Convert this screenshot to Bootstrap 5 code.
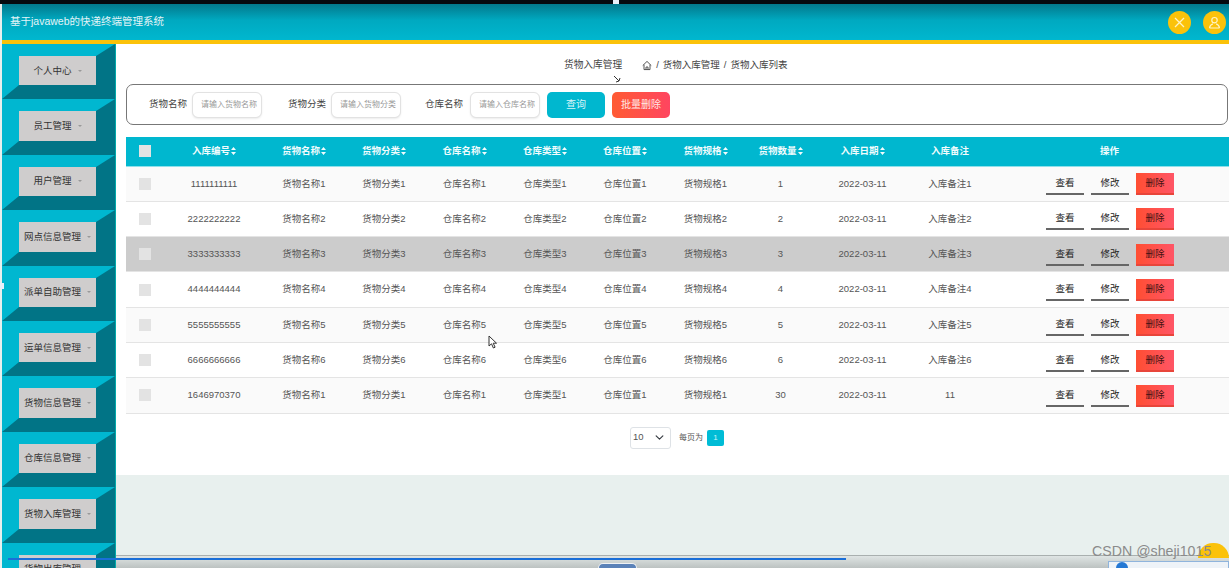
<!DOCTYPE html>
<html lang="zh">
<head>
    <meta charset="UTF-8">
    <meta name="viewport" content="width=device-width, initial-scale=1.0">
    <title>货物入库列表</title>
    <link href="https://cdn.jsdelivr.net/npm/bootstrap@5.3.0/dist/css/bootstrap.min.css" rel="stylesheet">
    <style>
        body {
            height: 568px;
            overflow: hidden;
            position: relative;
            background: #e8f0ee;
            font-family: "Liberation Sans", "Noto Sans CJK SC", sans-serif;
            font-size: 9.5px;
            color: #555;
        }
        .video-top { height: 4px; background: #06090f; flex: none; }
        .app-head {
            height: 36px;
            flex: none;
            margin-left: 2px;
            padding: 0 3px 0 8px;
            color: #e4f4f7;
            font-size: 10.5px;
            background: linear-gradient(180deg, #03788c 0, #00a9c0 45%, #00b7cf 100%);
        }
        .head-icons { column-gap: 12px; }
        .yellow-line { height: 4px; flex: none; margin-left: 2px; background: #fbc20a; }
        .round-icon {
            width: 23px;
            height: 23px;
            border-radius: 50%;
            background: #fbc20a;
        }
        .side-menu {
            width: 114px;
            flex: none;
            margin-left: 2px;
            overflow: hidden;
            border-right: 1px solid #0aa;
        }
        .side-btn {
            display: flex;
            align-items: center;
            justify-content: center;
            width: 113px;
            height: 55.4px;
            padding: 0;
            font-size: 9.5px;
            color: #333;
            border-radius: 0;
            background: #cfcdcd;
            border-style: solid;
            border-width: 12px 19px 14.4px 17px;
            border-color: #00b7d0 #017486 #017486 #00b7d0;
        }
        .side-btn:hover { color: #333; background: #cfcdcd; border-color: #00b7d0 #017486 #017486 #00b7d0; }
        .side-btn.dropdown-toggle::after { margin-left: 6px; border-top-color: #999; border-width: 2px 2px 0; }
        .main-pane { height: 431px; flex: none; background: #fff; padding: 0 0 0 10px; }
        .crumb-row { height: 40px; padding: 2px 0 0 438px; color: #444; font-size: 9.7px; }
        .crumb-row .breadcrumb { margin: 0 0 0 20px; font-size: 9.5px; }
        .crumb-row .breadcrumb-item + .breadcrumb-item { padding-left: 4px; }
        .crumb-row .breadcrumb-item + .breadcrumb-item::before { padding-right: 4px; color: #444; }
        .crumb-row .breadcrumb-item.active { color: #444; }
        .search-bar {
            height: 41px;
            margin-right: 1px;
            padding-left: 22px;
            border: 1.5px solid #777;
            border-radius: 7px;
            color: #444;
        }
        .search-bar label { margin-right: 5px; }
        .search-input {
            width: 70px;
            height: 26px;
            margin-right: 26px;
            padding: 0 0 0 8px;
            font-size: 8px;
            border: 1px solid #e2e2e2;
            border-radius: 6px;
            box-shadow: 0 1px 2px rgba(0, 0, 0, .08);
        }
        .search-bar .input-mid { margin-right: 24px; }
        .search-input::placeholder { color: #999; }
        .search-btn {
            width: 58px;
            height: 26px;
            padding: 0;
            font-size: 10px;
            color: #e8fbff;
            border: 0;
            border-radius: 5px;
        }
        .btn-cyan, .btn-cyan:hover { background: #00b7cf; color: #d8f5f9; }
        .btn-coral, .btn-coral:hover { background: linear-gradient(90deg, #ff5b33, #ff4560); color: #ffe9e4; }
        .search-bar .gap-seven { margin-right: 7px; }
        .data-table {
            table-layout: fixed;
            width: 1103px;
            margin: 12px 0 0;
            font-size: 9.5px;
        }
        .data-table th {
            height: 29px;
            padding: 0;
            text-align: center;
            vertical-align: middle;
            color: #f2fcfd;
            font-size: 9.5px;
            background: #00b7cf;
            border-bottom: 1px solid #8ee0ea;
        }
        .data-table td {
            height: 35.3px;
            padding: 0;
            text-align: center;
            vertical-align: middle;
            color: #555;
            background: var(--row-bg, #fff);
            border-bottom: 1px solid #e4e4e4;
        }
        .data-table tr.tone-soft { --row-bg: #fafafa; }
        .data-table tr.tone-grey { --row-bg: #cccccc; }
        .data-table th:first-child, .data-table td:first-child { text-align: left; padding-left: 13px; }
        .col-w38 { width: 38px; }
        .col-w69 { width: 69px; }
        .col-w80 { width: 80px; }
        .col-w81 { width: 81px; }
        .col-w95 { width: 95px; }
        .col-w100 { width: 100px; }
        .col-w239 { width: 239px; }
        .tick {
            display: block;
            width: 12px;
            height: 12px;
            appearance: none;
            background: #e3e3e3;
            border: 0;
            margin: 0;
        }
        .sort-mark { margin-left: 1px; vertical-align: -1px; }
        .row-ops { gap: 6.5px; padding: 1px 0 0 1px; }
        .op-btn {
            width: 38.5px;
            height: 22px;
            padding: 0;
            font-size: 9.5px;
            color: #222;
            background: transparent;
            border: 0;
            border-bottom: 2px solid #666;
            border-radius: 0;
        }
        .op-del, .op-del:hover {
            color: #411;
            background: linear-gradient(90deg, #ff4e32, #ff5566);
            border-bottom-color: #e8453a;
        }
        .pager { margin-top: 13px; padding-left: 504px; font-size: 8px; color: #555; }
        .page-size {
            width: 41px;
            height: 22px;
            padding: 0 0 0 2px;
            font-size: 9.5px;
            color: #555;
            background-size: 9px 9px;
            background-position: right 6px center;
            border-radius: 3px;
        }
        .page-now {
            width: 17px;
            height: 16px;
            border-radius: 2px;
            background: #00bcd6;
            color: #cdf3f8;
            text-align: center;
            line-height: 16px;
        }
        .play-bar {
            position: absolute;
            left: 116px;
            right: 0;
            bottom: 0;
            height: 13px;
            background: linear-gradient(180deg, #dfe5e4, #bcc2c1);
            border-top: 1px solid #a9b0af;
        }
        .play-progress {
            position: absolute;
            left: 8px;
            top: 558px;
            height: 2px;
            width: 838px;
            background: #1a6fd8;
        }
        .task-chip {
            position: absolute;
            left: 992px;
            bottom: 0;
            right: 0;
            height: 7px;
            padding-left: 7px;
            background: #eef3f8;
            border: 1px solid #8fb4dc;
            border-bottom: 0;
        }
        .task-chip span {
            display: block;
            width: 12px;
            height: 12px;
            border-radius: 50%;
            background: #2478d4;
        }
        .task-logo {
            position: absolute;
            left: 482px;
            bottom: 0;
            width: 39px;
            height: 5px;
            border-radius: 20px 20px 0 0;
            background: #5b82b8;
            border: 1px solid #eef1f4;
            border-bottom: 0;
        }
        .corner-dot {
            position: absolute;
            left: 1198px;
            top: 543px;
            width: 31px;
            height: 15px;
            border-radius: 16px 16px 0 0;
            background: #fbc20a;
        }
        .watermark {
            position: absolute;
            left: 1092px;
            top: 543px;
            color: #8b8b8b;
            font-size: 14.2px;
            line-height: 16px;
        }
        .video-handle { position: absolute; background: #e8f0fa; }
        .handle-top { left: 613px; top: 0; width: 6px; height: 4px; }
        .handle-left { left: 0; top: 283px; width: 4px; height: 6px; }
        .mouse-mark { position: absolute; }
        .mark-a { left: 488px; top: 335px; }
        .mark-b { left: 613px; top: 75px; }
    </style>
</head>
<body class="d-flex flex-column">
    <div class="video-top"></div>
    <header class="app-head d-flex align-items-center justify-content-between">
        <span>基于javaweb的快递终端管理系统</span>
        <div class="head-icons d-flex">
            <span class="round-icon d-flex align-items-center justify-content-center">
                <svg width="13" height="13" viewBox="0 0 13 13" fill="none" stroke="#fff3c4" stroke-width="1.3"><path d="M2 2l9 9M11 2l-9 9"/></svg>
            </span>
            <span class="round-icon d-flex align-items-center justify-content-center">
                <svg width="13" height="13" viewBox="0 0 13 13" fill="none" stroke="#fff3c4" stroke-width="1.2"><circle cx="6.5" cy="4.2" r="2.7"/><path d="M1.5 12c.3-2.6 2-3.8 3.4-4.2M11.5 12c-.3-2.6-2-3.8-3.4-4.2M1.5 12h10"/></svg>
            </span>
        </div>
    </header>
    <div class="yellow-line"></div>

    <div class="d-flex flex-grow-1 overflow-hidden">
        <nav class="side-menu" id="sideMenu"></nav>
        <div class="flex-grow-1">
            <main class="main-pane">
                <div class="crumb-row d-flex align-items-center">
                    <span>货物入库管理</span>
                    <ol class="breadcrumb align-items-center">
                        <li class="breadcrumb-item d-flex align-items-center">
                            <svg width="10" height="11" viewBox="0 0 11 11" fill="none" stroke="#444" stroke-width="1"><path d="M.8 5.6L5.5 1l4.7 4.6M2.2 4.6V10h6.6V4.6M4.4 10V7.2h2.2V10"/></svg>
                        </li>
                        <li class="breadcrumb-item">货物入库管理</li>
                        <li class="breadcrumb-item active">货物入库列表</li>
                    </ol>
                </div>
                <form class="search-bar d-flex align-items-center">
                    <label>货物名称</label><input class="form-control search-input" placeholder="请输入货物名称">
                    <label>货物分类</label><input class="form-control search-input input-mid" placeholder="请输入货物分类">
                    <label class="gap-seven">仓库名称</label><input class="form-control search-input gap-seven" placeholder="请输入仓库名称">
                    <button type="button" class="btn search-btn btn-cyan gap-seven">查询</button>
                    <button type="button" class="btn search-btn btn-coral">批量删除</button>
                </form>
                <table class="table data-table">
                    <colgroup>
                        <col class="col-w38"><col class="col-w100"><col class="col-w80"><col class="col-w80">
                        <col class="col-w81"><col class="col-w80"><col class="col-w80"><col class="col-w81">
                        <col class="col-w69"><col class="col-w95"><col class="col-w80"><col class="col-w239">
                    </colgroup>
                    <thead><tr id="headRow"></tr></thead>
                    <tbody id="tableBody"></tbody>
                </table>
                <div class="pager d-flex align-items-center">
                    <select class="form-select page-size"><option>10</option><option>20</option></select>
                    <span class="ms-2 me-1">每页为</span>
                    <span class="page-now">1</span>
                </div>
            </main>
        </div>
    </div>

    <!-- 视频播放条和水印 -->
    <div class="play-bar">
        <div class="task-logo"></div>
        <div class="task-chip"><span></span></div>
    </div>
    <div class="play-progress"></div>
    <div class="corner-dot"></div>
    <div class="watermark">CSDN @sheji1015</div>
    <div class="video-handle handle-top"></div>
    <div class="video-handle handle-left"></div>
    <svg class="mouse-mark mark-a" width="10" height="14" viewBox="0 0 10 14"><path d="M1 1v10l2.5-2.2L5.4 13l1.7-.8-1.9-4H8.5z" fill="#fff" stroke="#333" stroke-width="1"/></svg>
    <svg class="mouse-mark mark-b" width="8" height="9" viewBox="0 0 8 9" fill="none" stroke="#333"><path d="M1 1l5 5M3 7l3-1 1-3"/></svg>

    <script src="https://cdn.jsdelivr.net/npm/bootstrap@5.3.0/dist/js/bootstrap.bundle.min.js"></script>
    <script>
        const menus = ['个人中心', '员工管理', '用户管理', '网点信息管理', '派单自助管理', '运单信息管理', '货物信息管理', '仓库信息管理', '货物入库管理', '货物出库管理'];
        const columns = ['入库编号', '货物名称', '货物分类', '仓库名称', '仓库类型', '仓库位置', '货物规格', '货物数量', '入库日期'];
        const rows = [
            ['1111111111', 1, 1, 'tone-soft'],
            ['2222222222', 2, 2, ''],
            ['3333333333', 3, 3, 'tone-grey'],
            ['4444444444', 4, 4, ''],
            ['5555555555', 5, 5, 'tone-soft'],
            ['6666666666', 6, 6, ''],
            ['1646970370', 1, 30, 'tone-soft']
        ];
        const sortMark = '<svg class="sort-mark" width="5" height="8" viewBox="0 0 5 8" fill="#f2fcfd"><path d="M2.5 0L5 3H0zM2.5 8L0 5h5z"/></svg>';

        document.getElementById('sideMenu').innerHTML = menus.map(name =>
            `<button type="button" class="btn side-btn dropdown-toggle">${name}</button>`).join('');

        document.getElementById('headRow').innerHTML =
            '<th><input type="checkbox" class="tick"></th>' +
            columns.map(name => `<th>${name}${sortMark}</th>`).join('') +
            '<th>入库备注</th><th>操作</th>';

        document.getElementById('tableBody').innerHTML = rows.map(([code, n, qty, tone], i) => `
            <tr class="${tone}">
                <td><input type="checkbox" class="tick"></td>
                <td>${code}</td>
                <td>货物名称${n}</td>
                <td>货物分类${n}</td>
                <td>仓库名称${n}</td>
                <td>仓库类型${n}</td>
                <td>仓库位置${n}</td>
                <td>货物规格${n}</td>
                <td>${qty}</td>
                <td>2022-03-11</td>
                <td>${i === 6 ? '11' : '入库备注' + n}</td>
                <td><div class="row-ops d-flex justify-content-center">
                    <button type="button" class="btn op-btn">查看</button>
                    <button type="button" class="btn op-btn">修改</button>
                    <button type="button" class="btn op-btn op-del">删除</button>
                </div></td>
            </tr>`).join('');
    </script>
</body>
</html>
